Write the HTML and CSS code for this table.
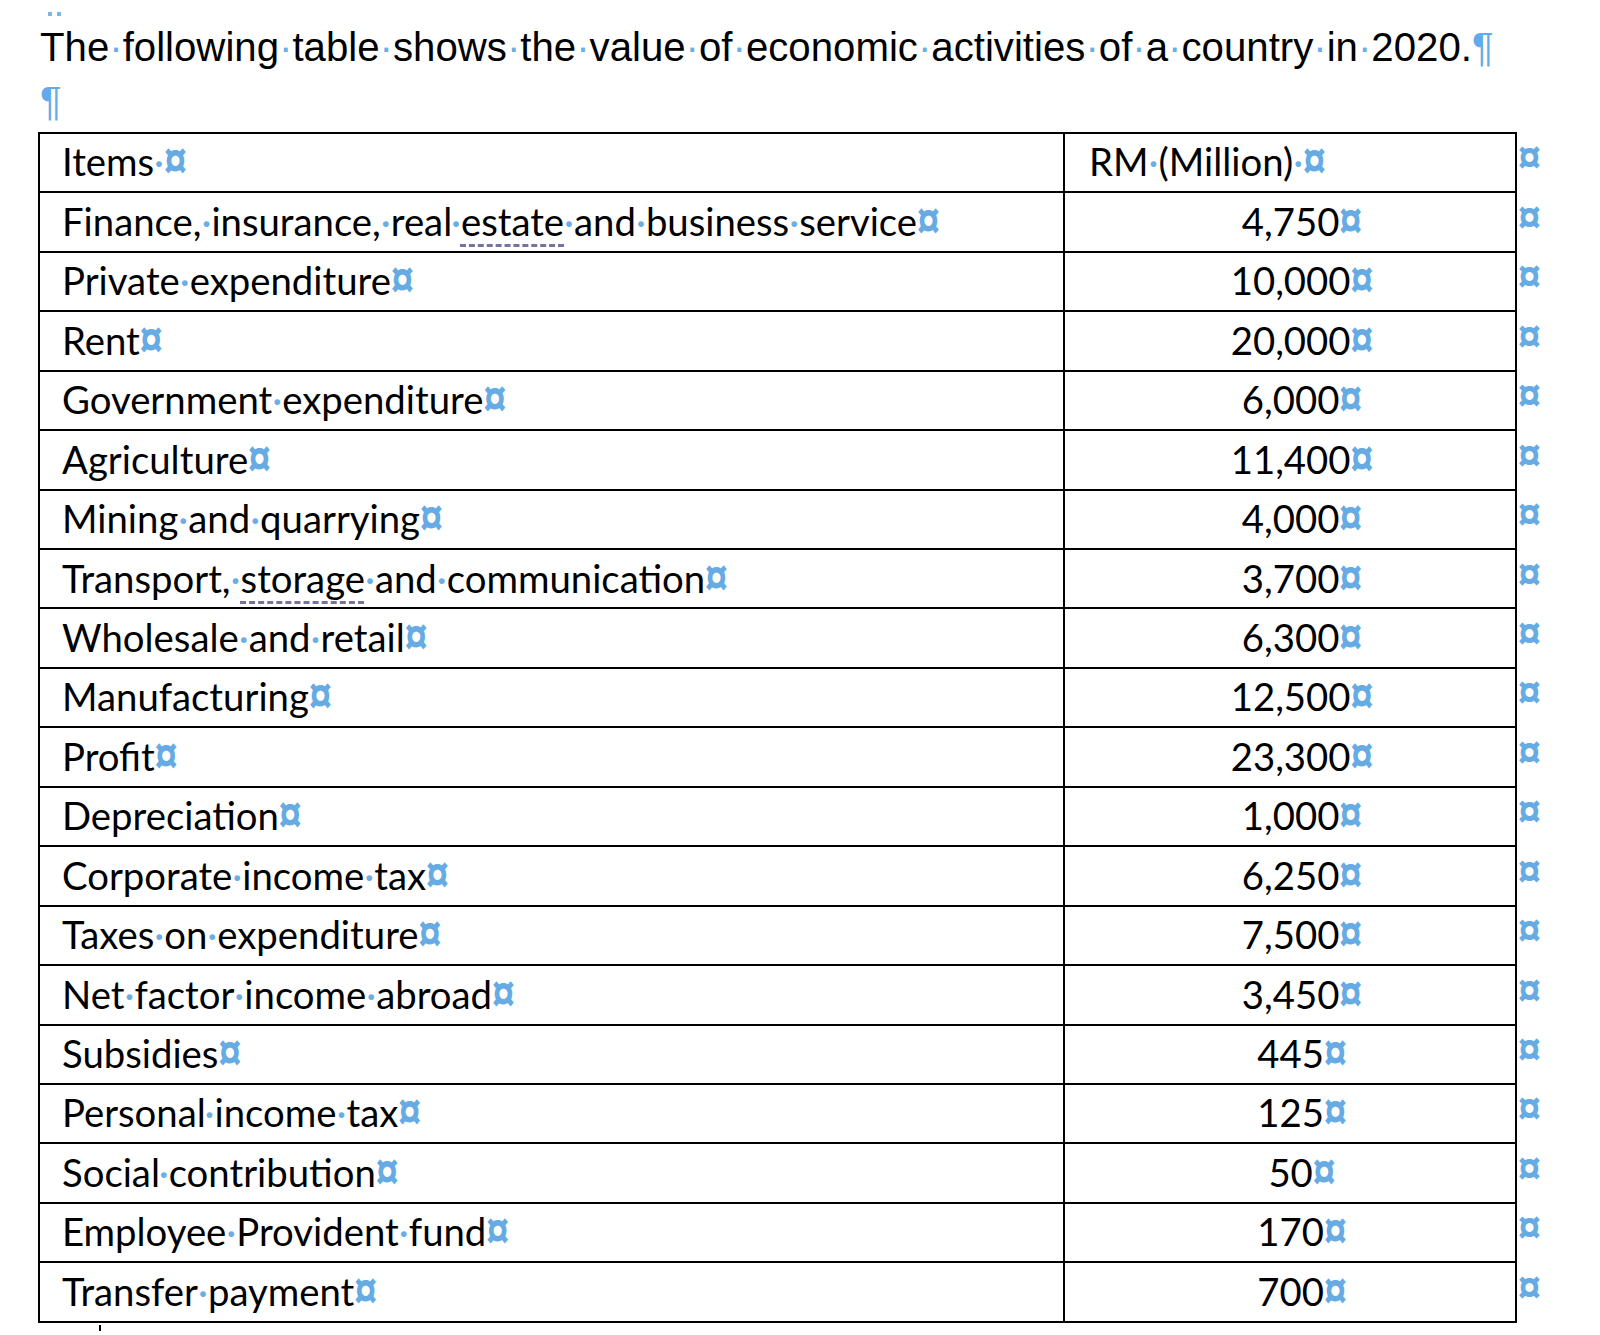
FILE: index.html
```html
<!DOCTYPE html>
<html lang="en">
<head>
<meta charset="utf-8">
<title>Economic activities table</title>
<link rel="stylesheet" href="styles.css">
</head>
<body>
<div class="page">
  <div class="marks"><span class="sq"></span><span class="sq"></span></div>
  <p class="title">The<span class="s">·</span>following<span class="s">·</span>table<span class="s">·</span>shows<span class="s">·</span>the<span class="s">·</span>value<span class="s">·</span>of<span class="s">·</span>economic<span class="s">·</span>activities<span class="s">·</span>of<span class="s">·</span>a<span class="s">·</span>country<span class="s">·</span>in<span class="s">·</span>2020.<span class="pil">¶</span></p>
  <p class="title"><span class="pil">¶</span></p>

  <div class="tbl">
    <div class="c c1 hd">Items<span class="s">·</span><span class="m">¤</span></div>
    <div class="c c2 hd left">RM<span class="s">·</span>(Million)<span class="s">·</span><span class="m">¤</span></div>
    <div class="c c3 hd"><span class="m r">¤</span></div>

    <div class="c c1">Finance,<span class="s">·</span>insurance,<span class="s">·</span>real<span class="s">·</span><span class="u">estate</span><span class="s">·</span>and<span class="s">·</span>business<span class="s">·</span>service<span class="m">¤</span></div>
    <div class="c c2">4,750<span class="m">¤</span></div>
    <div class="c c3"><span class="m r">¤</span></div>

    <div class="c c1">Private<span class="s">·</span>expenditure<span class="m">¤</span></div>
    <div class="c c2">10,000<span class="m">¤</span></div>
    <div class="c c3"><span class="m r">¤</span></div>

    <div class="c c1">Rent<span class="m">¤</span></div>
    <div class="c c2">20,000<span class="m">¤</span></div>
    <div class="c c3"><span class="m r">¤</span></div>

    <div class="c c1">Government<span class="s">·</span>expenditure<span class="m">¤</span></div>
    <div class="c c2">6,000<span class="m">¤</span></div>
    <div class="c c3"><span class="m r">¤</span></div>

    <div class="c c1">Agriculture<span class="m">¤</span></div>
    <div class="c c2">11,400<span class="m">¤</span></div>
    <div class="c c3"><span class="m r">¤</span></div>

    <div class="c c1">Mining<span class="s">·</span>and<span class="s">·</span>quarrying<span class="m">¤</span></div>
    <div class="c c2">4,000<span class="m">¤</span></div>
    <div class="c c3"><span class="m r">¤</span></div>

    <div class="c c1">Transport,<span class="s">·</span><span class="u">storage</span><span class="s">·</span>and<span class="s">·</span>communication<span class="m">¤</span></div>
    <div class="c c2">3,700<span class="m">¤</span></div>
    <div class="c c3"><span class="m r">¤</span></div>

    <div class="c c1">Wholesale<span class="s">·</span>and<span class="s">·</span>retail<span class="m">¤</span></div>
    <div class="c c2">6,300<span class="m">¤</span></div>
    <div class="c c3"><span class="m r">¤</span></div>

    <div class="c c1">Manufacturing<span class="m">¤</span></div>
    <div class="c c2">12,500<span class="m">¤</span></div>
    <div class="c c3"><span class="m r">¤</span></div>

    <div class="c c1">Profit<span class="m">¤</span></div>
    <div class="c c2">23,300<span class="m">¤</span></div>
    <div class="c c3"><span class="m r">¤</span></div>

    <div class="c c1">Depreciation<span class="m">¤</span></div>
    <div class="c c2">1,000<span class="m">¤</span></div>
    <div class="c c3"><span class="m r">¤</span></div>

    <div class="c c1">Corporate<span class="s">·</span>income<span class="s">·</span>tax<span class="m">¤</span></div>
    <div class="c c2">6,250<span class="m">¤</span></div>
    <div class="c c3"><span class="m r">¤</span></div>

    <div class="c c1">Taxes<span class="s">·</span>on<span class="s">·</span>expenditure<span class="m">¤</span></div>
    <div class="c c2">7,500<span class="m">¤</span></div>
    <div class="c c3"><span class="m r">¤</span></div>

    <div class="c c1">Net<span class="s">·</span>factor<span class="s">·</span>income<span class="s">·</span>abroad<span class="m">¤</span></div>
    <div class="c c2">3,450<span class="m">¤</span></div>
    <div class="c c3"><span class="m r">¤</span></div>

    <div class="c c1">Subsidies<span class="m">¤</span></div>
    <div class="c c2">445<span class="m">¤</span></div>
    <div class="c c3"><span class="m r">¤</span></div>

    <div class="c c1">Personal<span class="s">·</span>income<span class="s">·</span>tax<span class="m">¤</span></div>
    <div class="c c2">125<span class="m">¤</span></div>
    <div class="c c3"><span class="m r">¤</span></div>

    <div class="c c1">Social<span class="s">·</span>contribution<span class="m">¤</span></div>
    <div class="c c2">50<span class="m">¤</span></div>
    <div class="c c3"><span class="m r">¤</span></div>

    <div class="c c1">Employee<span class="s">·</span>Provident<span class="s">·</span>fund<span class="m">¤</span></div>
    <div class="c c2">170<span class="m">¤</span></div>
    <div class="c c3"><span class="m r">¤</span></div>

    <div class="c c1">Transfer<span class="s">·</span>payment<span class="m">¤</span></div>
    <div class="c c2">700<span class="m">¤</span></div>
    <div class="c c3"><span class="m r">¤</span></div>
  </div>
  <div class="tick"></div>
</div>
</body>
</html>
```

FILE: styles.css
```css
html, body {
  margin: 0;
  padding: 0;
  background: #fff;
}

.page {
  padding-top: 12px;
  color: #000;
}

.marks {
  display: flex;
  gap: 5px;
  height: 4px;
  margin-left: 48px;
}

.sq {
  width: 4px;
  height: 4px;
  background: #7fb5e2;
}

.title {
  margin: 0 0 0 40px;
  font-family: "Liberation Sans", Arial, sans-serif;
  font-size: 40.2px;
  line-height: 54px;
  white-space: nowrap;
}

.marks + .title {
  margin-top: 4.6px;
}

.s {
  color: #6aaee6;
}

.pil {
  color: #62aaea;
}

.tbl {
  display: grid;
  grid-template-columns: 1027px 452px 60px;
  margin: 3.4px 0 0 38px;
  font-family: "Lato", "Carlito", Calibri, sans-serif;
  font-size: 38.3px;
}

.c {
  box-sizing: border-box;
  height: 59.45px;
  padding-top: 5.5px;
  line-height: 45.6px;
  white-space: nowrap;
}

.c1 {
  border-left: 2px solid #000;
  border-right: 2px solid #000;
  border-bottom: 2px solid #000;
  padding-left: 22px;
}

.c2 {
  border-right: 2px solid #000;
  border-bottom: 2px solid #000;
  padding-left: 24px;
  text-align: center;
}

.c2.left {
  text-align: left;
}

.c3 {
  padding-left: 1px;
}

.hd {
  height: 61.45px;
  border-top: 2px solid #000;
}

.c3.hd {
  border-top-color: transparent;
}

.m {
  display: inline-block;
  color: #66abe3;
  font-family: "Liberation Sans", Arial, sans-serif;
  font-weight: bold;
  font-size: 41px;
  line-height: 1;
  transform: scaleY(1.22);
  transform-origin: 50% 30px;
}

.m.r {
  transform: translateY(-4px) scaleY(1.08);
}

.u {
  text-decoration-line: underline;
  text-decoration-style: dashed;
  text-decoration-color: #77739f;
  text-decoration-thickness: 3px;
  text-underline-offset: 8px;
  text-decoration-skip-ink: none;
}

.tick {
  width: 2px;
  height: 6px;
  margin: 2px 0 0 99px;
  background: #000;
}
```
